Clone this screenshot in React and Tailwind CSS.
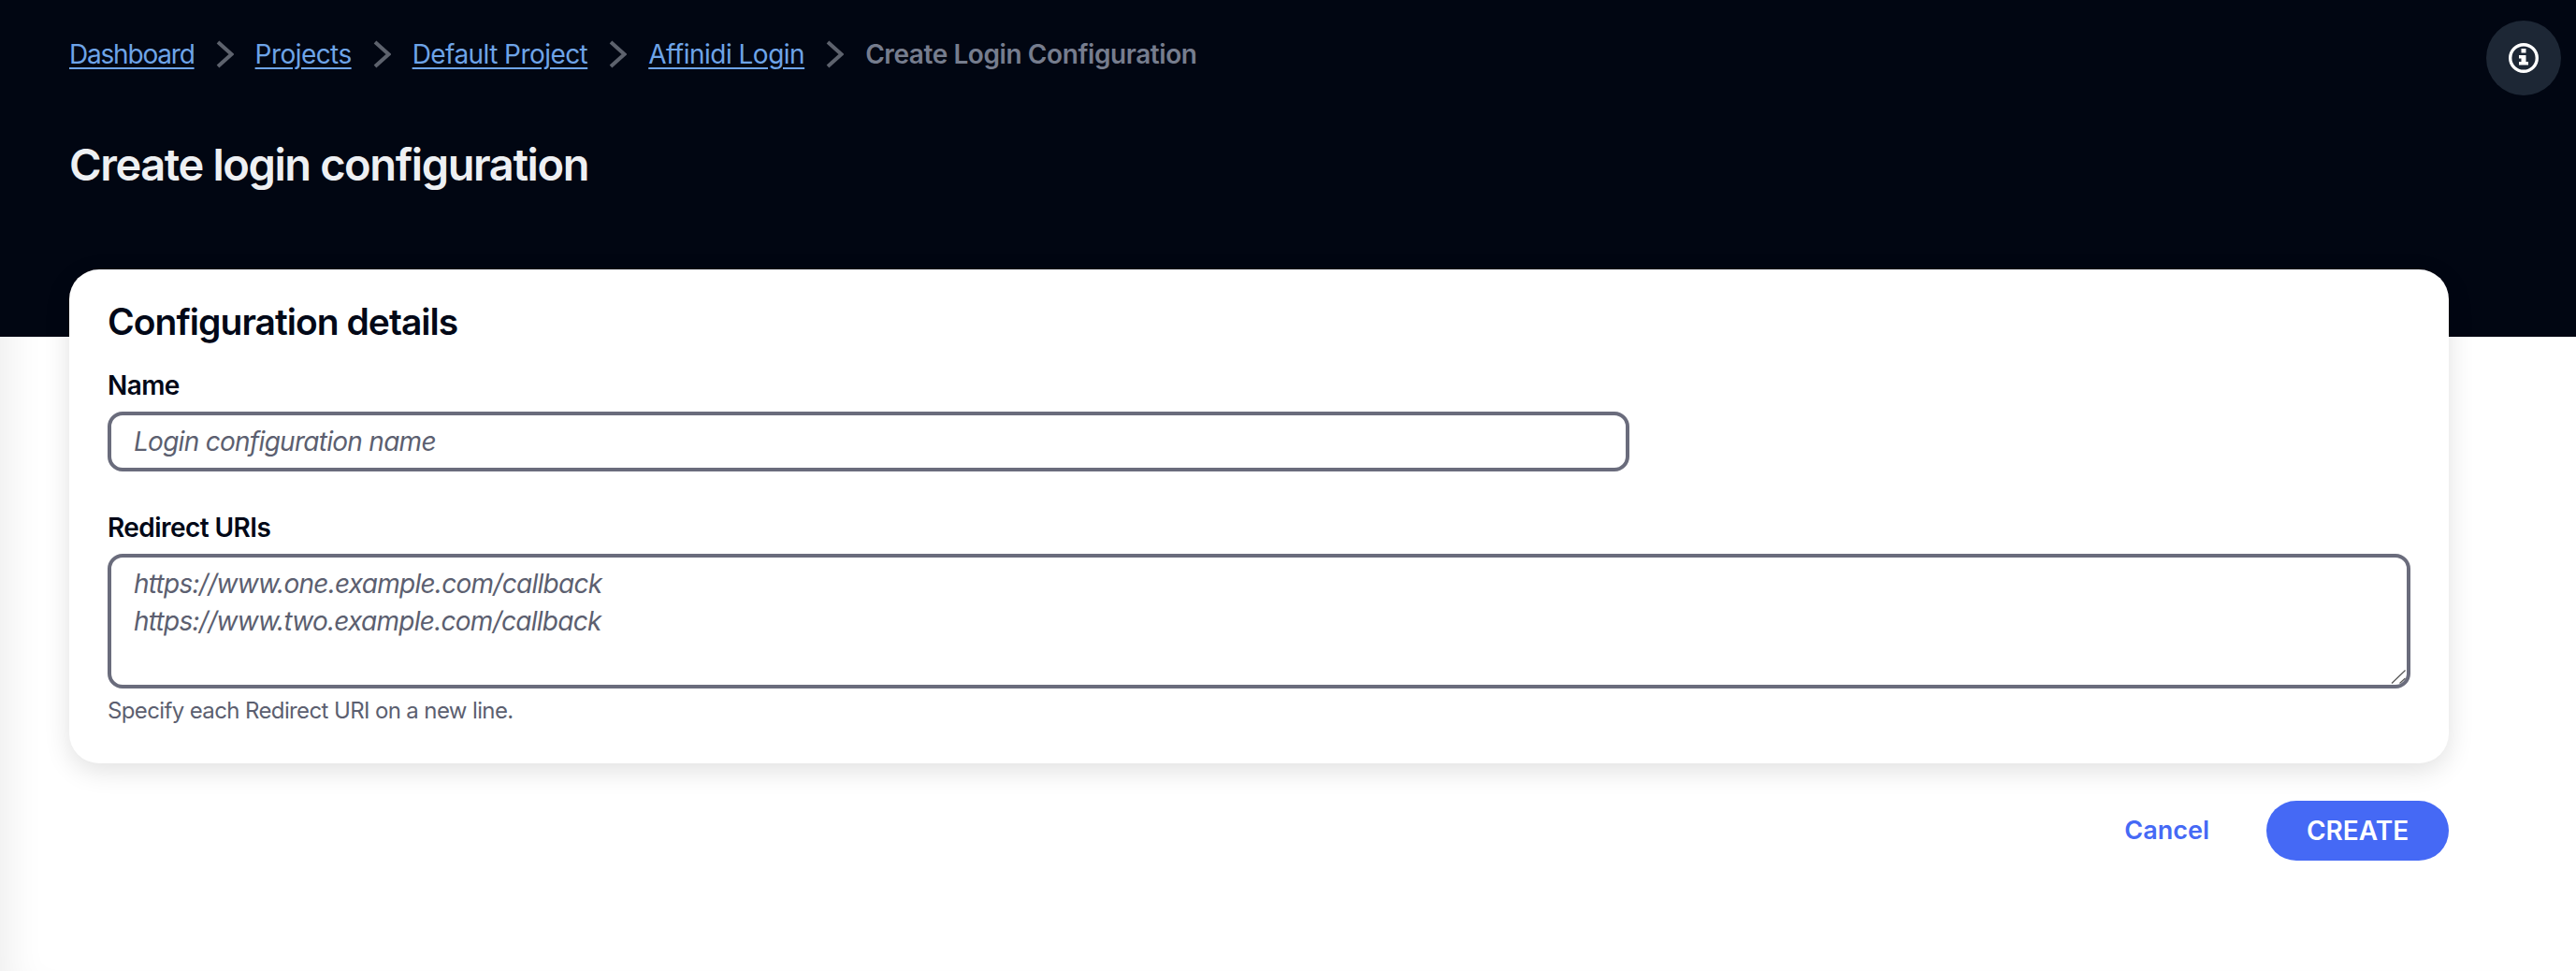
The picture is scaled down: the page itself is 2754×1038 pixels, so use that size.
import { useState } from "react";

const crumbs = [
  { label: "Dashboard", className: "tracking-[-0.043em]" },
  { label: "Projects", className: "tracking-[-0.02em]" },
  { label: "Default Project", className: "tracking-[-0.02em]" },
  { label: "Affinidi Login", className: "tracking-[-0.018em]" },
];

const Chevron = () => (
  <svg width="19" height="30" viewBox="0 0 19 30" fill="none" className="shrink-0">
    <path d="M2 2 L16.5 15 L2 28" stroke="#5d626d" strokeWidth="4" />
  </svg>
);

const InfoIcon = () => (
  <svg width="40" height="40" viewBox="0 0 40 40" fill="none">
    <circle cx="20" cy="20" r="14.3" stroke="currentColor" strokeWidth="3.4" />
    <rect x="17.5" y="10" width="5" height="4.5" fill="currentColor" />
    <path d="M15 17h7.5v7H25v3.5H15V24h2.5v-3.5H15z" fill="currentColor" />
  </svg>
);

const App = () => {
  const [name, setName] = useState("");
  const [uris, setUris] = useState("");

  return (
    <div className="relative min-h-[1038px] bg-white font-['Inter',sans-serif] shadow-[inset_40px_0_40px_-30px_rgba(0,0,0,0.07)]">
      <header className="h-[360px] bg-[#010612] px-[74px] pt-[43px]">
        <nav className="flex h-[30px] items-center gap-[23px] text-[28px] leading-[30px]">
          {crumbs.map((crumb) => (
            <div key={crumb.label} className="flex items-center gap-[23px]">
              <a href="#" className={`text-[#6ea4e8] underline underline-offset-[4px] ${crumb.className}`}>
                {crumb.label}
              </a>
              <Chevron />
            </div>
          ))}
          <span className="font-semibold tracking-[-0.015em] text-[#767d8e]">Create Login Configuration</span>
        </nav>
        <h1 className="mt-[73px] text-[47px] leading-[60px] font-semibold tracking-[-0.03em] text-[#eef0f3]">
          Create login configuration
        </h1>
      </header>

      <button
        type="button"
        className="absolute top-[22px] right-[16px] flex h-[80px] w-[80px] items-center justify-center rounded-full bg-[#1d2735] text-white"
      >
        <InfoIcon />
      </button>

      <main className="-mt-[72px] w-[2692px] px-[74px]">
        <section className="rounded-[32px] bg-white px-[41px] pt-[30px] pb-[40px] shadow-[0_8px_28px_rgba(0,0,0,0.12)]">
          <h2 className="text-[39px] leading-[52px] font-semibold tracking-[-0.025em] text-[#020817]">Configuration details</h2>

          <label className="mt-[22px] block text-[28px] leading-[40px] font-semibold tracking-[-0.02em] text-[#020817]">Name</label>
          <input
            value={name}
            onChange={(e) => setName(e.target.value)}
            placeholder="Login configuration name"
            className="mt-[8px] block h-[64px] w-[1627px] rounded-[16px] border-4 border-[#6a6c7c] px-[24px] text-[28px] tracking-[-0.026em] italic outline-none placeholder:text-[#5c5f70]"
          />

          <label className="mt-[40px] block text-[28px] leading-[40px] font-semibold tracking-[-0.02em] text-[#020817]">Redirect URIs</label>
          <div className="relative mt-[8px]">
            <textarea
              value={uris}
              onChange={(e) => setUris(e.target.value)}
              placeholder={"https://www.one.example.com/callback\nhttps://www.two.example.com/callback"}
              className="block h-[144px] w-full resize-none rounded-[16px] border-4 border-[#6a6c7c] px-[24px] py-[8px] text-[28px] leading-[40px] tracking-[-0.026em] italic outline-none placeholder:text-[#5c5f70]"
            />
            <svg width="16" height="15" viewBox="0 0 16 15" className="absolute right-[5px] bottom-[5px]">
              <path d="M15.5 0.5 L1 14.5 M15.5 9 L9.5 14.5" stroke="#555" strokeWidth="1.2" fill="none" />
            </svg>
          </div>
          <p className="mt-[8px] text-[24px] leading-[32px] tracking-[-0.026em] text-[#5c5f70]">Specify each Redirect URI on a new line.</p>
        </section>

        <div className="mt-[40px] flex items-center justify-end gap-[61px]">
          <button type="button" className="text-[27px] font-semibold text-[#4569f5]">
            Cancel
          </button>
          <button
            type="button"
            className="h-[64px] w-[195px] rounded-full bg-[#4569f5] text-[28px] font-semibold text-white"
          >
            CREATE
          </button>
        </div>
      </main>
    </div>
  );
};

export default App;
